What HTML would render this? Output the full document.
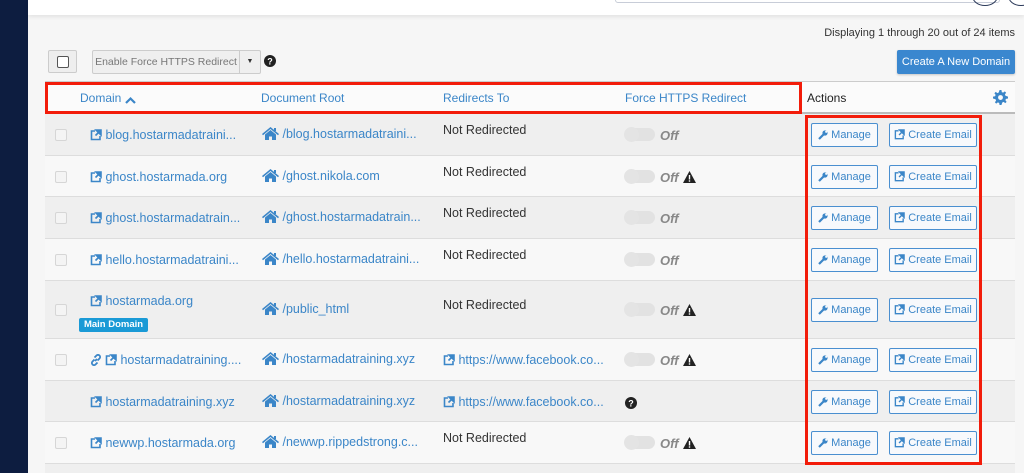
<!DOCTYPE html>
<html style="width:1024px;height:473px;overflow:hidden"><head><meta charset="utf-8">
<style>
*{box-sizing:border-box;margin:0;padding:0}
body{width:1024px;height:473px;overflow:hidden;background:#f6f6f6;font-family:"Liberation Sans",sans-serif;font-size:12px;color:#333;position:relative}
.a{position:absolute}
.nav{left:0;top:0;width:28px;height:473px;background:#0d1d40}
.hdr{left:28px;top:0;width:996px;height:15px;background:#fff;box-shadow:0 2px 4px rgba(0,0,0,.08)}
.lnk{color:#3b86c8;white-space:nowrap}
.row{position:absolute;left:45px;width:970px;border-bottom:1px solid #ddd}
.g{background:#efefef}.w{background:#f8f8f8}
.cb{position:absolute;left:10px;width:12px;height:12px;border:1px solid #d6d6d6;border-radius:2px;background:#f4f4f4}
.btn{position:absolute;height:24px;border:1px solid #4a8fd0;border-radius:2px;color:#3b86c8;font-size:11px;line-height:22px;text-align:center;background:#f7f9fc;white-space:nowrap}
.tog{position:absolute;width:30px;height:13px;border-radius:7px;background:#e2e2e2}
.tog:before{content:"";position:absolute;left:-1px;top:-1px;width:15px;height:15px;border-radius:50%;background:#e4e4e4}
.off{position:absolute;font-style:italic;font-weight:bold;color:#888;font-size:13px}
svg{vertical-align:-2px}
</style></head><body>
<div class="a nav"></div>
<div class="a hdr"></div>
<div class="a" style="left:615px;top:-6px;width:385px;height:9px;border:1px solid #c8cdd8;border-radius:3px;background:#fff"></div>
<div class="a" style="left:972px;top:-14px;width:26px;height:20px;border:1px solid #2c3a5a;border-radius:50%"></div>
<div class="a" style="left:1008px;top:-14px;width:26px;height:20px;border:1px solid #2c3a5a;border-radius:50%"></div>

<div class="a" style="right:9px;top:27px;font-size:11px;color:#333;white-space:nowrap">Displaying 1 through 20 out of 24 items</div>
<div class="a" style="left:897px;top:50px;width:118px;height:24px;background:#3a87cf;border-radius:2px;color:#fff;font-size:11px;line-height:24px;text-align:center;box-shadow:0 1px 2px rgba(0,0,0,.2);white-space:nowrap">Create A New Domain</div>

<div class="a" style="left:48px;top:50px;width:29px;height:23px;border:1px solid #ccc;border-radius:2px;background:#eee"><div style="margin:5px 0 0 8px;width:12px;height:12px;border:1px solid #555;border-radius:2px;background:#fff"></div></div>
<div class="a" style="left:92px;top:50px;width:148px;height:24px;border:1px solid #ccc;border-radius:2px 0 0 2px;background:#efefef;color:#777;font-size:10.5px;line-height:22px;text-align:center;white-space:nowrap;overflow:hidden">Enable Force HTTPS Redirect</div>
<div class="a" style="left:239px;top:50px;width:22px;height:24px;border:1px solid #ccc;border-radius:0 2px 2px 0;background:#efefef;text-align:center;line-height:22px;color:#333;font-size:7px">▼</div>
<svg class="a" style="left:264px;top:55px" width="12" height="12" viewBox="0 0 12 12"><circle cx="6" cy="6" r="6" fill="#222"/><text x="6" y="9.5" font-size="9" font-weight="bold" fill="#fff" text-anchor="middle" font-family="Liberation Sans">?</text></svg>

<div class="a" style="left:45px;top:81px;width:970px;height:33px;background:#fbfbfb;border-top:1px solid #ccc;border-bottom:2px solid #bbb"></div>
<div class="a lnk" style="left:80px;top:91px;font-size:12px">Domain <svg width="11" height="8" viewBox="0 0 11 8"><path d="M1 7L5.5 2.5L10 7" stroke="#3b86c8" stroke-width="2.2" fill="none"/></svg></div>
<div class="a lnk" style="left:261px;top:91px">Document Root</div>
<div class="a lnk" style="left:443px;top:91px">Redirects To</div>
<div class="a lnk" style="left:625px;top:91px">Force HTTPS Redirect</div>
<div class="a" style="left:807px;top:91px;color:#222">Actions</div>
<svg class="a" style="left:993px;top:90px" width="15" height="15" viewBox="0 0 16 16"><path fill="#3b86c8" d="M7 0h2l.4 2.2 1.4.6 1.8-1.3 1.4 1.4-1.3 1.8.6 1.4L16 7v2l-2.2.4-.6 1.4 1.3 1.8-1.4 1.4-1.8-1.3-1.4.6L9 16H7l-.4-2.2-1.4-.6-1.8 1.3-1.4-1.4 1.3-1.8-.6-1.4L0 9V7l2.2-.4.6-1.4L1.5 3.4l1.4-1.4 1.8 1.3 1.4-.6z"/><circle cx="8" cy="8" r="2.6" fill="#fbfbfb"/></svg>

<div class="row g" style="top:114px;height:42px"></div>
<div class="row w" style="top:156px;height:41px"></div>
<div class="row g" style="top:197px;height:42px"></div>
<div class="row w" style="top:239px;height:42px"></div>
<div class="row g" style="top:281px;height:58px"></div>
<div class="row w" style="top:339px;height:42px"></div>
<div class="row g" style="top:381px;height:41px"></div>
<div class="row w" style="top:422px;height:42px"></div>
<div class="row g" style="top:464px;height:9px;border-bottom:none"></div>

<div id="content"></div>
<script>
var ext='<svg width="12" height="12" viewBox="0 0 12 12"><path d="M5 2H1.5v8.5H10V7" stroke="#3b86c8" stroke-width="1.6" fill="none"/><path d="M6 1h5v5z M10.5 1.5L5.5 6.5" stroke="#3b86c8" stroke-width="1.6" fill="#3b86c8"/></svg>';
var extS='<svg width="11" height="11" viewBox="0 0 12 12"><path d="M5 2H1.5v8.5H10V7" stroke="#3b86c8" stroke-width="1.5" fill="none"/><path d="M6 1h5v5z M10.5 1.5L5.5 6.5" stroke="#3b86c8" stroke-width="1.5" fill="#3b86c8"/></svg>';
var home='<svg width="17" height="13" viewBox="0 0 17 13"><path d="M8.5 0L0 7l1 1.2L8.5 2l7.5 6.2L17 7z" fill="#3b86c8"/><path d="M3 7.5L8.5 3 14 7.5V13H10V9.5H7V13H3z" fill="#3b86c8"/><rect x="12" y="1" width="2" height="3" fill="#3b86c8"/></svg>';
var wr='<svg width="10" height="10" viewBox="0 0 10 10"><path d="M1 9L5.5 4.5" stroke="#3b86c8" stroke-width="2.2"/><circle cx="7" cy="3" r="2.6" fill="#3b86c8"/><circle cx="8.2" cy="1.8" r="1.1" fill="#f7f9fc"/></svg>';
var warn='<svg width="13" height="12" viewBox="0 0 13 12"><path d="M6.5 0L13 12H0z" fill="#222"/><rect x="5.8" y="4" width="1.4" height="4.5" fill="#fff"/><rect x="5.8" y="9.3" width="1.4" height="1.4" fill="#fff"/></svg>';
var q='<svg width="12" height="12" viewBox="0 0 12 12"><circle cx="6" cy="6" r="6" fill="#222"/><text x="6" y="9.5" font-size="9" font-weight="bold" fill="#fff" text-anchor="middle" font-family="Liberation Sans">?</text></svg>';
var rows=[
[114,42,'blog.hostarmadatraini...','/blog.hostarmadatraini...','N',1,0,1],
[156,41,'ghost.hostarmada.org','/ghost.nikola.com','N',1,1,1],
[197,42,'ghost.hostarmadatrain...','/ghost.hostarmadatrain...','N',1,0,1],
[239,42,'hello.hostarmadatraini...','/hello.hostarmadatraini...','N',1,0,1],
[281,58,'hostarmada.org','/public_html','N',1,1,1],
[339,42,'hostarmadatraining....','/hostarmadatraining.xyz','https://www.facebook.co...',1,1,1],
[381,41,'hostarmadatraining.xyz','/hostarmadatraining.xyz','https://www.facebook.co...',0,2,0],
[422,42,'newwp.hostarmada.org','/newwp.rippedstrong.c...','N',1,1,1]];
var h='';
rows.forEach(function(r,i){
 var t=r[0],c=t+r[1]/2;
 if(r[7])h+='<div class="cb" style="left:55px;top:'+(c-6)+'px"></div>';
 var dy=(i==4)?t+13:c-7;
 var dx=(i==5)?105:90;
 if(i==5)h+='<svg class="a" style="left:90px;top:'+(c-6)+'px" width="12" height="12" viewBox="0 0 12 12"><path d="M5 7L7 5M4.5 5.5l-2 2a2 2 0 003 3l2-2M7.5 6.5l2-2a2 2 0 00-3-3l-2 2" stroke="#3b86c8" stroke-width="1.8" fill="none"/></svg>';
 h+='<div class="a lnk" style="left:'+dx+'px;top:'+dy+'px;font-size:12.5px">'+ext+' '+r[2]+'</div>';
 if(i==4)h+='<div class="a" style="left:79px;top:318px;width:69px;height:14px;background:#1a9ad6;border-radius:2px;color:#fff;font-size:9.5px;font-weight:bold;line-height:14px;text-align:center">Main Domain</div>';
 h+='<div class="a lnk" style="left:262px;top:'+(c-8)+'px;font-size:12.5px">'+home+' '+r[3]+'</div>';
 if(r[4]=='N')h+='<div class="a" style="left:443px;top:'+(c-12)+'px;font-size:12.5px;color:#333">Not Redirected</div>';
 else h+='<div class="a lnk" style="left:443px;top:'+(c-7)+'px;font-size:12.5px">'+ext+' '+r[4]+'</div>';
 if(r[5]){h+='<div class="tog" style="left:625px;top:'+(c-7)+'px"></div><div class="off" style="left:660px;top:'+(c-7)+'px">Off</div>';
  if(r[6]==1)h+='<div class="a" style="left:683px;top:'+(c-7)+'px">'+warn+'</div>';}
 if(r[6]==2)h+='<div class="a" style="left:625px;top:'+(c-6)+'px">'+q+'</div>';
 h+='<div class="btn" style="left:811px;width:67px;top:'+(c-12)+'px">'+wr+' Manage</div>';
 h+='<div class="btn" style="left:889px;width:88px;top:'+(c-12)+'px">'+extS+' Create Email</div>';
});
document.getElementById('content').innerHTML=h;
</script>
<div class="a" style="left:45px;top:82px;width:757px;height:32px;border:3px solid #f21c0a"></div>
<div class="a" style="left:805px;top:115px;width:177px;height:350px;border:3px solid #f21c0a"></div>
</body></html>
